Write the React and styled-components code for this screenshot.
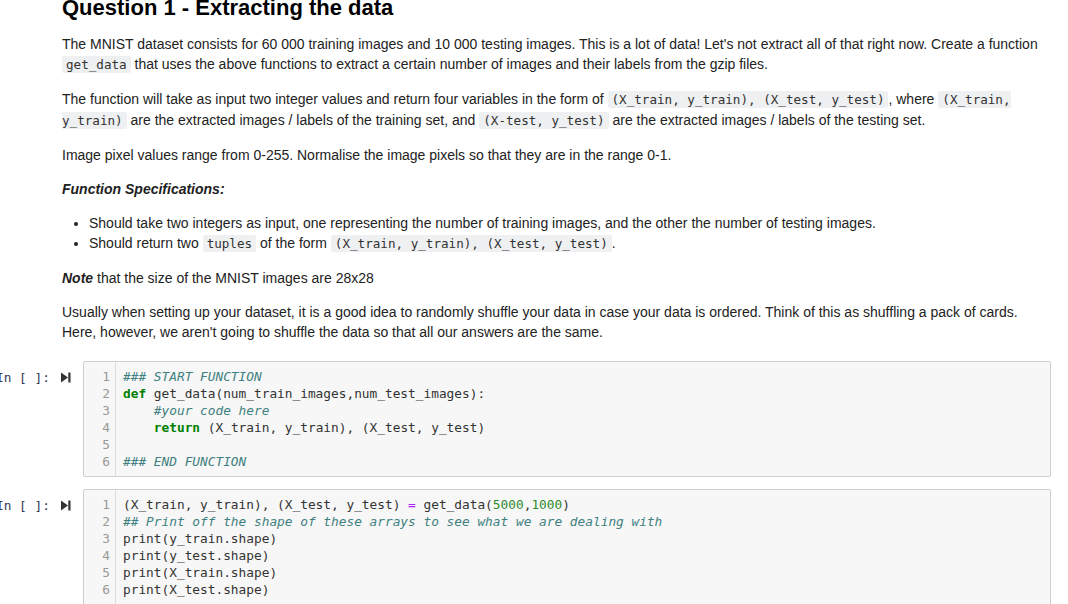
import React from "react";
import styled, { createGlobalStyle } from "styled-components";

const Global = createGlobalStyle`
  html, body {
    margin: 0;
    padding: 0;
    background: #fff;
    overflow: hidden;
  }
  body {
    font-family: "Liberation Sans", Arial, sans-serif;
    font-size: 14px;
    color: #222;
  }
`;

function Instructions() {
  return (
    <Markdown>
      <Title>Question 1 - Extracting the data</Title>
      <P>
        The MNIST dataset consists for 60 000 training images and 10 000 testing
        images. This is a lot of data! Let's not extract all of that right now.
        Create a function <Code>get_data</Code> that uses the above functions to
        extract a certain number of images and their labels from the gzip files.
      </P>
      <P>
        The function will take as input two integer values and return four
        variables in the form of <Code>(X_train, y_train), (X_test, y_test)</Code>,
        where <Code>(X_train, y_train)</Code> are the extracted images / labels of
        the training set, and <Code>(X-test, y_test)</Code> are the extracted
        images / labels of the testing set.
      </P>
      <P>
        Image pixel values range from 0-255. Normalise the image pixels so that
        they are in the range 0-1.
      </P>
      <P>
        <strong>
          <em>Function Specifications:</em>
        </strong>
      </P>
      <List>
        <li>
          Should take two integers as input, one representing the number of
          training images, and the other the number of testing images.
        </li>
        <li>
          Should return two <Code>tuples</Code> of the form{" "}
          <Code>(X_train, y_train), (X_test, y_test)</Code>.
        </li>
      </List>
      <P>
        <strong>
          <em>Note</em>
        </strong>{" "}
        that the size of the MNIST images are 28x28
      </P>
      <P>
        Usually when setting up your dataset, it is a good idea to randomly
        shuffle your data in case your data is ordered. Think of this as shuffling
        a pack of cards. Here, however, we aren't going to shuffle the data so
        that all our answers are the same.
      </P>
    </Markdown>
  );
}

// token: [kind, text]
const cell1 = [
  [["comment", "### START FUNCTION"]],
  [
    ["keyword", "def"],
    ["plain", " get_data(num_train_images,num_test_images):"],
  ],
  [["plain", "    "], ["comment", "#your code here"]],
  [
    ["plain", "    "],
    ["keyword", "return"],
    ["plain", " (X_train, y_train), (X_test, y_test)"],
  ],
  [["plain", ""]],
  [["comment", "### END FUNCTION"]],
];

const cell2 = [
  [
    ["plain", "(X_train, y_train), (X_test, y_test) "],
    ["operator", "="],
    ["plain", " get_data("],
    ["number", "5000"],
    ["plain", ","],
    ["number", "1000"],
    ["plain", ")"],
  ],
  [["comment", "## Print off the shape of these arrays to see what we are dealing with"]],
  [["plain", "print(y_train.shape)"]],
  [["plain", "print(y_test.shape)"]],
  [["plain", "print(X_train.shape)"]],
  [["plain", "print(X_test.shape)"]],
];

function RunIcon() {
  return (
    <svg width="10" height="11" viewBox="0 0 10 11">
      <path d="M0 0.5 L7 5.5 L0 10.5 Z" fill="#333" />
      <rect x="7.3" y="0.5" width="2.2" height="10" fill="#333" />
    </svg>
  );
}

function CodeCell({ lines }) {
  return (
    <CellRow>
      <Prompt>In [ ]:</Prompt>
      <RunArea>
        <RunIcon />
      </RunArea>
      <InputBox>
        <Gutter>
          {lines.map((_, i) => (
            <LineNo key={i}>{i + 1}</LineNo>
          ))}
        </Gutter>
        <Editor>
          {lines.map((toks, i) => (
            <Line key={i}>
              {toks.map(([kind, text], j) => (
                <Tok key={j} $kind={kind}>
                  {text}
                </Tok>
              ))}
            </Line>
          ))}
        </Editor>
      </InputBox>
    </CellRow>
  );
}

export default function App() {
  return (
    <>
      <Global />
      <Notebook>
        <Instructions />
        <Cells>
          <CodeCell lines={cell1} />
          <CodeCell lines={cell2} />
        </Cells>
      </Notebook>
    </>
  );
}

const Notebook = styled.div`
  width: 1068px;
  height: 604px;
  overflow: hidden;
`;

const Markdown = styled.div`
  padding: 0 17px 0 62px;
  line-height: 20px;
`;

const Title = styled.h2`
  margin: -5px 0 13px;
  font-size: 22px;
  line-height: 26px;
  font-weight: bold;
  color: #000;
`;

const P = styled.p`
  margin: 0 0 14px;
`;

const List = styled.ul`
  margin: 0 0 14px;
  padding-left: 27px;
  li {
    margin: 0;
  }
`;

const Code = styled.code`
  font-family: "DejaVu Sans Mono", "Liberation Mono", monospace;
  font-size: 12.6px;
  background: #eff0f1;
  padding: 1px 4px;
  color: #333;
  border-radius: 2px;
`;

const Cells = styled.div`
  display: flex;
  flex-direction: column;
  gap: 12px;
  margin-top: 19px;
`;

const CellRow = styled.div`
  display: flex;
  align-items: flex-start;
  margin-right: 17px;
`;

const Prompt = styled.div`
  width: 53px;
  margin-left: -4px;
  padding-top: 8px;
  font-family: "DejaVu Sans Mono", "Liberation Mono", monospace;
  font-size: 12.8px;
  line-height: 17px;
  color: #303a4f;
  white-space: pre;
`;

const RunArea = styled.div`
  width: 34px;
  padding-top: 11px;
  padding-left: 12px;
  box-sizing: border-box;
  display: flex;
`;

const InputBox = styled.div`
  flex: 1;
  display: flex;
  background: #f7f7f7;
  border: 1px solid #cfcfcf;
  border-radius: 2px;
  padding: 6px 0;
`;

const Gutter = styled.div`
  width: 32px;
  box-sizing: border-box;
  padding-right: 5px;
  border-right: 1px solid #ddd;
  margin: -6px 0;
  padding-top: 6px;
  padding-bottom: 6px;
  text-align: right;
`;

const LineNo = styled.div`
  font-family: "DejaVu Sans Mono", "Liberation Mono", monospace;
  font-size: 12.8px;
  line-height: 17px;
  color: #999;
`;

const Editor = styled.div`
  padding-left: 7px;
  flex: 1;
`;

const Line = styled.div`
  font-family: "DejaVu Sans Mono", "Liberation Mono", monospace;
  font-size: 12.8px;
  line-height: 17px;
  height: 17px;
  white-space: pre;
  color: #333;
`;

const tokColors = {
  plain: "#333",
  comment: "#408080",
  keyword: "#008000",
  operator: "#aa22ff",
  number: "#2e8b2e",
};

const Tok = styled.span`
  color: ${(p) => tokColors[p.$kind]};
  font-style: ${(p) => (p.$kind === "comment" ? "italic" : "normal")};
  font-weight: ${(p) => (p.$kind === "keyword" ? "bold" : "normal")};
`;
